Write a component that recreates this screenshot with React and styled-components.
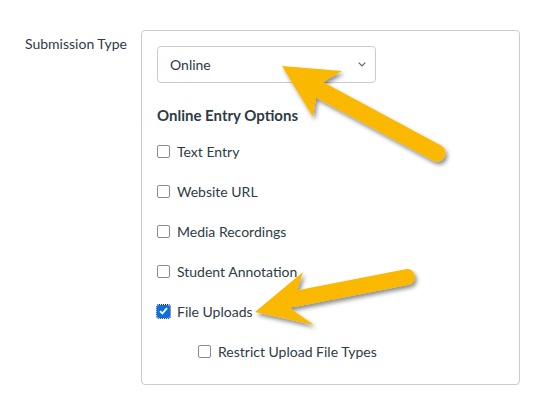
import React from "react";
import styled, { createGlobalStyle } from "styled-components";

const GlobalStyle = createGlobalStyle`
  html, body {
    margin: 0;
    padding: 0;
    background: #ffffff;
  }
  body {
    font-family: "Lato", "Liberation Sans", sans-serif;
    color: #2d3b45;
  }
`;

const Page = styled.div`
  position: relative;
  width: 542px;
  height: 403px;
  overflow: hidden;
  background: #ffffff;
`;

const Row = styled.div`
  display: flex;
  align-items: flex-start;
  padding: 30px 0 0 25px;
`;

const Label = styled.div`
  width: 116px;
  padding-top: 4px;
  font-size: 14px;
  line-height: 20px;
  color: #2d3b45;
`;

const Panel = styled.div`
  width: 379px;
  height: 355px;
  box-sizing: border-box;
  border: 1px solid #c7cdd1;
  border-radius: 4px;
  padding: 15px 15px 0 15px;
  display: flex;
  flex-direction: column;
`;

const Select = styled.div`
  width: 219px;
  height: 37px;
  box-sizing: border-box;
  border: 1px solid #c7cdd1;
  border-radius: 4px;
  display: flex;
  align-items: center;
  justify-content: space-between;
  padding: 0 9px 0 12px;
  font-size: 14px;
  color: #2d3b45;
`;

const Heading = styled.div`
  margin-top: 22px;
  font-size: 15px;
  font-weight: 700;
  line-height: 20px;
  color: #2d3b45;
`;

const Options = styled.div`
  margin-top: 16px;
  display: flex;
  flex-direction: column;
  gap: 20px;
`;

const Option = styled.div`
  display: flex;
  align-items: center;
  gap: 7px;
  height: 20px;
  padding-left: ${(p) => (p.$indent ? "41px" : "0")};
  font-size: 14px;
  color: #2d3b45;
`;

const Box = styled.span`
  width: 13px;
  height: 13px;
  box-sizing: border-box;
  border-radius: 2px;
  border: ${(p) => (p.$checked ? "none" : "1.6px solid #8b8898")};
  background: ${(p) => (p.$checked ? "#0b6fe0" : "#ffffff")};
  outline: ${(p) => (p.$checked ? "1px dotted #1a2a6c" : "none")};
  outline-offset: 0px;
  display: flex;
  align-items: center;
  justify-content: center;
`;

const Overlay = styled.svg`
  position: absolute;
  left: 0;
  top: 0;
  pointer-events: none;
`;

const Chevron = () => (
  <svg width="8" height="5" viewBox="0 0 8 5">
    <path d="M0.7 0.7 L4 4 L7.3 0.7" fill="none" stroke="#55606a" strokeWidth="1.1" />
  </svg>
);

const Check = () => (
  <svg width="9" height="8" viewBox="0 0 9 8">
    <path d="M1 4.2 L3.4 6.4 L8 1.2" fill="none" stroke="#ffffff" strokeWidth="1.8" />
  </svg>
);

const CheckOption = ({ label, checked, indent }) => (
  <Option $indent={indent}>
    <Box $checked={checked}>{checked && <Check />}</Box>
    {label}
  </Option>
);

const Arrows = () => (
  <Overlay width="542" height="403" viewBox="0 0 542 403">
    <defs>
      <filter id="shadow" x="-20%" y="-20%" width="140%" height="140%">
        <feDropShadow dx="2" dy="3" stdDeviation="2" floodColor="#000" floodOpacity="0.45" />
      </filter>
    </defs>
    <g filter="url(#shadow)" fill="#fbb800" stroke="#fbb800">
      <line x1="318" y1="89" x2="437" y2="153" strokeWidth="17" strokeLinecap="round" />
      <polygon points="282,66 342,71 323,82 316,97 313,117" strokeWidth="0" />
    </g>
    <g filter="url(#shadow)" fill="#fbb800" stroke="#fbb800">
      <line x1="294" y1="299" x2="407" y2="277" strokeWidth="16" strokeLinecap="round" />
      <polygon points="255,312 303,272 297,291 291,309 314,325" strokeWidth="0" />
    </g>
  </Overlay>
);

export default function App() {
  return (
    <Page>
      <GlobalStyle />
      <Row>
        <Label>Submission Type</Label>
        <Panel>
          <Select>
            Online
            <Chevron />
          </Select>
          <Heading>Online Entry Options</Heading>
          <Options>
            <CheckOption label="Text Entry" />
            <CheckOption label="Website URL" />
            <CheckOption label="Media Recordings" />
            <CheckOption label="Student Annotation" />
            <CheckOption label="File Uploads" checked />
            <CheckOption label="Restrict Upload File Types" indent />
          </Options>
        </Panel>
      </Row>
      <Arrows />
    </Page>
  );
}
